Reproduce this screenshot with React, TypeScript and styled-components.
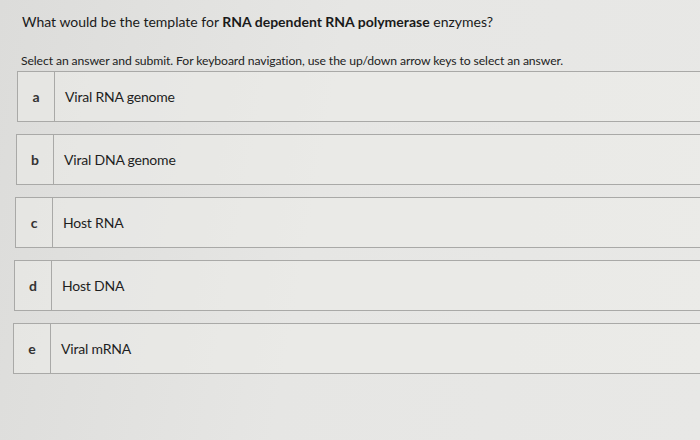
import React from 'react';
import styled, {createGlobalStyle} from 'styled-components';

const GlobalStyle = createGlobalStyle`
  body {
    margin: 0;
    background: #e2e2e0;
    font-family: Lato, "Open Sans", sans-serif;
    color: #1e1e1e;
  }
`;

interface Choice {
  key: string;
  text: string;
}

const choices: Choice[] = [
  {key: 'a', text: 'Viral RNA genome'},
  {key: 'b', text: 'Viral DNA genome'},
  {key: 'c', text: 'Host RNA'},
  {key: 'd', text: 'Host DNA'},
  {key: 'e', text: 'Viral mRNA'},
];

function App() {
  let rows = choices.map((choice, i) => {
    return (
      <Option key={choice.key} indent={17 - i}>
        <Letter>{choice.key}</Letter>
        <OptionText>{choice.text}</OptionText>
      </Option>
    )
  });

  return (
    <Page>
      <GlobalStyle/>
      <Question>
        What would be the template for <b>RNA dependent RNA polymerase</b> enzymes?
      </Question>
      <Hint>
        Select an answer and submit. For keyboard navigation, use the up/down arrow keys to select an answer.
      </Hint>
      <OptionList>
        {rows}
      </OptionList>
    </Page>
  )
}

const Page = styled.div`
  width: 700px;
  height: 440px;
  overflow: hidden;
  padding-top: 12px;
  box-sizing: border-box;
  background: linear-gradient(100deg, #dcdcda 0%, #e6e6e4 45%, #e8e8e6 100%);
`;

const Question = styled.div`
  padding-left: 22px;
  font-size: 14px;
  line-height: 20px;
  color: #1a1a1a;

  b {
    font-weight: 700;
  }
`;

const Hint = styled.div`
  padding-left: 21px;
  margin-top: 21px;
  font-size: 12.2px;
  line-height: 16px;
  letter-spacing: -0.1px;
  color: #222;
`;

const OptionList = styled.div`
  display: flex;
  flex-direction: column;
  gap: 12px;
  margin-top: 2px;
`;

const Option = styled.div<{indent: number}>`
  display: flex;
  align-items: stretch;
  height: 49px;
  margin-left: ${p => p.indent}px;
  border: 1px solid #a9a9a7;
  border-right: none;
  background: rgba(236, 236, 234, 0.55);
`;

const Letter = styled.div`
  display: flex;
  align-items: center;
  justify-content: center;
  width: 36px;
  border-right: 1px solid #a9a9a7;
  font-size: 14px;
  font-weight: 700;
  color: #333;
  padding-bottom: 1px;
`;

const OptionText = styled.div`
  display: flex;
  align-items: center;
  padding-left: 10px;
  padding-bottom: 1px;
  font-size: 14px;
  letter-spacing: -0.2px;
  color: #1e1e1e;
`;

export default App;
